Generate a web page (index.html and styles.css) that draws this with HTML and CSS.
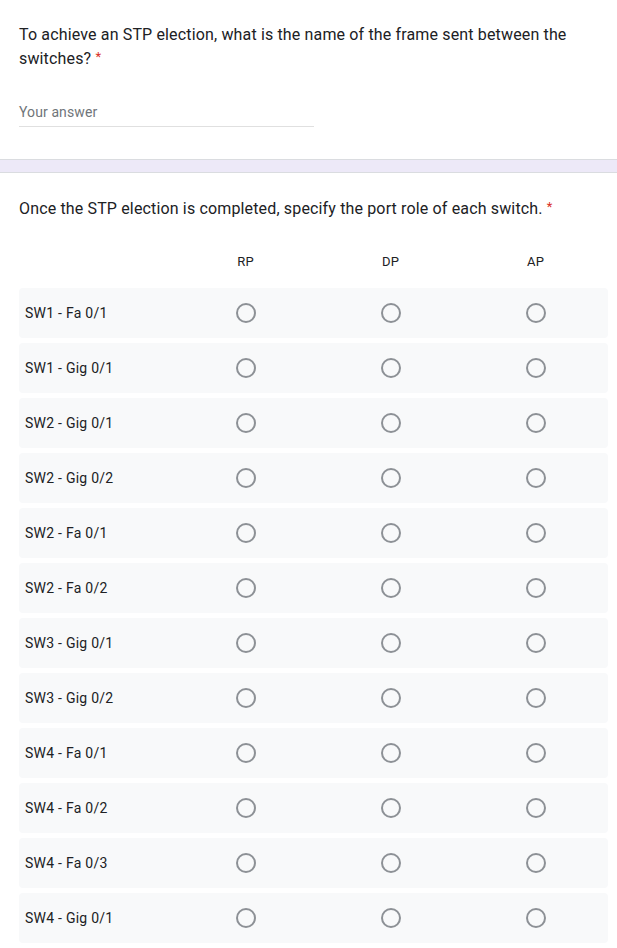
FILE: index.html
```html
<!DOCTYPE html>
<html>
<head>
<meta charset="utf-8">
<link rel="stylesheet" href="styles.css">
</head>
<body>
<div class="q1">
  <div class="title">To achieve an STP election, what is the name of the frame sent between the switches?&nbsp;<span class="req">*</span></div>
  <div class="answer">Your answer</div>
</div>
<div class="band"></div>
<div class="q2">
  <div class="title">Once the STP election is completed, specify the port role of each switch.&nbsp;<span class="req">*</span></div>
  <div class="grid">
    <div class="head">
      <div></div><div class="col">RP</div><div class="col">DP</div><div class="col">AP</div>
    </div>
    <div class="row"><div class="label">SW1 - Fa 0/1</div><div class="cell"><span class="radio"></span></div><div class="cell"><span class="radio"></span></div><div class="cell"><span class="radio"></span></div></div>
    <div class="row"><div class="label">SW1 - Gig 0/1</div><div class="cell"><span class="radio"></span></div><div class="cell"><span class="radio"></span></div><div class="cell"><span class="radio"></span></div></div>
    <div class="row"><div class="label">SW2 - Gig 0/1</div><div class="cell"><span class="radio"></span></div><div class="cell"><span class="radio"></span></div><div class="cell"><span class="radio"></span></div></div>
    <div class="row"><div class="label">SW2 - Gig 0/2</div><div class="cell"><span class="radio"></span></div><div class="cell"><span class="radio"></span></div><div class="cell"><span class="radio"></span></div></div>
    <div class="row"><div class="label">SW2 - Fa 0/1</div><div class="cell"><span class="radio"></span></div><div class="cell"><span class="radio"></span></div><div class="cell"><span class="radio"></span></div></div>
    <div class="row"><div class="label">SW2 - Fa 0/2</div><div class="cell"><span class="radio"></span></div><div class="cell"><span class="radio"></span></div><div class="cell"><span class="radio"></span></div></div>
    <div class="row"><div class="label">SW3 - Gig 0/1</div><div class="cell"><span class="radio"></span></div><div class="cell"><span class="radio"></span></div><div class="cell"><span class="radio"></span></div></div>
    <div class="row"><div class="label">SW3 - Gig 0/2</div><div class="cell"><span class="radio"></span></div><div class="cell"><span class="radio"></span></div><div class="cell"><span class="radio"></span></div></div>
    <div class="row"><div class="label">SW4 - Fa 0/1</div><div class="cell"><span class="radio"></span></div><div class="cell"><span class="radio"></span></div><div class="cell"><span class="radio"></span></div></div>
    <div class="row"><div class="label">SW4 - Fa 0/2</div><div class="cell"><span class="radio"></span></div><div class="cell"><span class="radio"></span></div><div class="cell"><span class="radio"></span></div></div>
    <div class="row"><div class="label">SW4 - Fa 0/3</div><div class="cell"><span class="radio"></span></div><div class="cell"><span class="radio"></span></div><div class="cell"><span class="radio"></span></div></div>
    <div class="row"><div class="label">SW4 - Gig 0/1</div><div class="cell"><span class="radio"></span></div><div class="cell"><span class="radio"></span></div><div class="cell"><span class="radio"></span></div></div>
  </div>
</div>
</body>
</html>
```
FILE: styles.css
```css
html, body {
  margin: 0;
  padding: 0;
  background: #ffffff;
}
body {
  font-family: Roboto, "Liberation Sans", sans-serif;
  color: #202124;
}
.q1 {
  padding: 23px 0 0 19px;
}
.title {
  font-size: 16px;
  line-height: 24px;
  letter-spacing: 0.15px;
  color: #202124;
  padding-right: 30px;
}
.req {
  color: #d93025;
  font-size: 13px;
  vertical-align: top;
  line-height: 20px;
}
.answer {
  margin-top: 31px;
  width: 295px;
  font-size: 14px;
  line-height: 20px;
  letter-spacing: 0.1px;
  padding-bottom: 4px;
  color: #70757a;
  border-bottom: 1px solid #e0e0e0;
}
.band {
  margin-top: 32px;
  height: 12px;
  background: #ede9f8;
  border-top: 1px solid #dadce0;
  border-bottom: 1px solid #dadce0;
}
.q2 {
  padding: 24px 0 0 19px;
}
.grid {
  width: 589px;
  margin-top: 28px;
}
.head, .row {
  display: grid;
  grid-template-columns: 154px 145px 145px 145px;
  align-items: center;
}
.head {
  height: 24px;
  margin-bottom: 15px;
}
.col {
  text-align: center;
  font-size: 13px;
  letter-spacing: 0.2px;
  color: #202124;
}
.row {
  height: 50px;
  margin-bottom: 5px;
  background: #f8f9fa;
  border-radius: 4px;
}
.label {
  padding-left: 6px;
  font-size: 14px;
  letter-spacing: 0.25px;
  color: #202124;
}
.cell {
  display: flex;
  justify-content: center;
}
.radio {
  width: 16px;
  height: 16px;
  border: 2px solid #8d9196;
  border-radius: 50%;
  box-sizing: content-box;
}
```
